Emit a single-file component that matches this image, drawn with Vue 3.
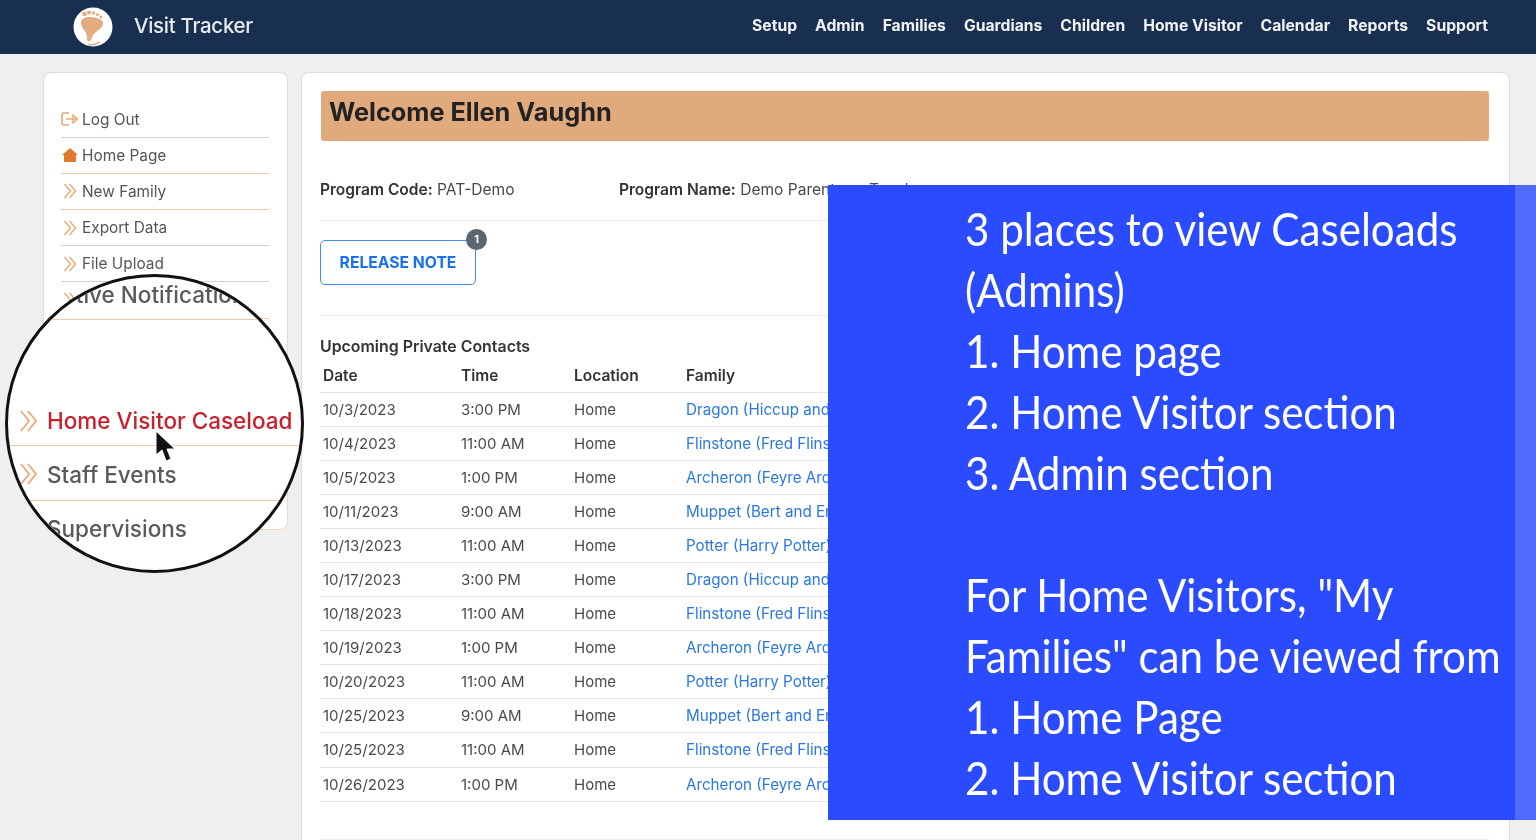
<template>
  <div class="app">
    <header class="topbar">
      <div class="brand">
        <span class="logo">
          <svg viewBox="0 0 40 40" width="40" height="40">
            <circle cx="20" cy="20" r="19.500" fill="#fff" />
            <path d="M8 16c0-4 4-6 8-6 5 0 12 1 14 5 1 4-3 7-7 10-3 2-4 5-5 8-1 2-4 2-4-1 0-5-1-6-3-9-2-2-3-5-3-7z" fill="#e3ac80" />
            <circle cx="11.500" cy="7" r="2.300" fill="#e3ac80" />
            <circle cx="16" cy="5.500" r="1.900" fill="#e3ac80" />
            <circle cx="20.500" cy="6" r="1.700" fill="#e3ac80" />
            <circle cx="24.500" cy="7.500" r="1.500" fill="#e3ac80" />
            <circle cx="28" cy="10" r="1.400" fill="#e3ac80" />
            <path d="M15 37.500c5 1 9-.5 11.500-3" fill="none" stroke="#e3ac80" stroke-width="1.500" />
          </svg>
        </span>
        <span class="brand-name">Visit Tracker</span>
      </div>
      <nav class="nav">
        <a v-for="n in navItems" :key="n">{{ n }}</a>
      </nav>
    </header>

    <div class="content">
      <aside class="side card">
        <div v-for="s in sideItems" :key="s.label" class="side-item" :class="{ warm: s.warm }">
          <span class="side-icon">
            <svg v-if="s.icon === 'logout'" viewBox="0 0 18 14" width="18" height="14">
              <path d="M8 1H3a2 2 0 0 0-2 2v8a2 2 0 0 0 2 2h5" fill="none" stroke="#e8a86c" stroke-width="1.500" />
              <path d="M5 7h11M12 3 16.500 7 12 11z" fill="none" stroke="#e8a86c" stroke-width="1.300" />
            </svg>
            <svg v-else-if="s.icon === 'home'" viewBox="0 0 16 14" width="16" height="14">
              <path d="M8 0 16 7h-2v7H2V7H0z" fill="#e07a30" />
            </svg>
            <svg v-else viewBox="0 0 14 16" width="14" height="16">
              <path d="M1.500 1l6 7-6 7M6.500 1l6 7-6 7" fill="none" stroke="#e8a86c" stroke-width="1.300" />
            </svg>
          </span>
          <span>{{ s.label }}</span>
        </div>
      </aside>

      <main class="main card">
        <div class="banner"><h1>Welcome Ellen Vaughn</h1></div>
        <div class="program">
          <span class="program-code"><b>Program Code:</b> PAT-Demo</span>
          <span><b>Program Name:</b> Demo Parents as Teachers</span>
        </div>
        <div class="release">
          <button type="button" class="release-btn">
            RELEASE NOTE
            <span class="badge">1</span>
          </button>
        </div>
        <h2 class="table-title">Upcoming Private Contacts</h2>
        <table class="contacts">
          <thead>
            <tr>
              <th class="c-date">Date</th>
              <th class="c-time">Time</th>
              <th class="c-loc">Location</th>
              <th>Family</th>
            </tr>
          </thead>
          <tbody>
            <tr v-for="(r, i) in contacts" :key="i">
              <td>{{ r[0] }}</td>
              <td>{{ r[1] }}</td>
              <td>Home</td>
              <td><a>{{ r[2] }}</a></td>
            </tr>
          </tbody>
        </table>
        <div class="table-end"></div>
      </main>
    </div>

    <!-- zoom lens over the sidebar -->
    <div class="lens">
      <div class="lens-row lens-top"><span>Active Notifications</span></div>
      <div class="lens-row lens-red">
        <svg class="chev" viewBox="0 0 20 22" width="20" height="22">
          <path d="M2 1l8 10-8 10M9 1l8 10-8 10" fill="none" stroke="#eba876" stroke-width="1.800" />
        </svg>
        <span>Home Visitor Caseload</span>
      </div>
      <div class="lens-row lens-staff">
        <svg class="chev" viewBox="0 0 20 22" width="20" height="22">
          <path d="M2 1l8 10-8 10M9 1l8 10-8 10" fill="none" stroke="#eba876" stroke-width="1.800" />
        </svg>
        <span>Staff Events</span>
      </div>
      <div class="lens-sup"><span>Supervisions</span></div>
    </div>
    <svg class="cursor" viewBox="0 0 20 32" width="20" height="32">
      <path d="M1 0v24l6-5 4 11 5-2-4-10h8z" fill="#111" stroke="#fff" stroke-width="1" />
    </svg>

    <!-- caption panel -->
    <section class="caption">
      <div class="caption-text">
        <p v-for="(l, i) in captionLines" :key="i">{{ l }}</p>
      </div>
    </section>
  </div>
</template>

<script setup>
const navItems = ['Setup', 'Admin', 'Families', 'Guardians', 'Children', 'Home Visitor', 'Calendar', 'Reports', 'Support']

const sideItems = [
  { label: 'Log Out', icon: 'logout' },
  { label: 'Home Page', icon: 'home', warm: true },
  { label: 'New Family', icon: 'chev', warm: true },
  { label: 'Export Data', icon: 'chev' },
  { label: 'File Upload', icon: 'chev' },
  { label: 'Active Notifications', icon: 'chev', warm: true },
  { label: 'Home Visitor Caseload', icon: 'chev', warm: true },
  { label: 'Staff Events', icon: 'chev', warm: true },
  { label: 'Supervisions', icon: 'chev', warm: true },
]

const contacts = [
  ['10/3/2023', '3:00 PM', 'Dragon (Hiccup and Astrid Haddock)'],
  ['10/4/2023', '11:00 AM', 'Flinstone (Fred Flinstone)'],
  ['10/5/2023', '1:00 PM', 'Archeron (Feyre Archeron)'],
  ['10/11/2023', '9:00 AM', 'Muppet (Bert and Ernie Muppet)'],
  ['10/13/2023', '11:00 AM', 'Potter (Harry Potter)'],
  ['10/17/2023', '3:00 PM', 'Dragon (Hiccup and Astrid Haddock)'],
  ['10/18/2023', '11:00 AM', 'Flinstone (Fred Flinstone)'],
  ['10/19/2023', '1:00 PM', 'Archeron (Feyre Archeron)'],
  ['10/20/2023', '11:00 AM', 'Potter (Harry Potter)'],
  ['10/25/2023', '9:00 AM', 'Muppet (Bert and Ernie Muppet)'],
  ['10/25/2023', '11:00 AM', 'Flinstone (Fred Flinstone)'],
  ['10/26/2023', '1:00 PM', 'Archeron (Feyre Archeron)'],
]

const captionLines = [
  '3 places to view Caseloads',
  '(Admins)',
  '1. Home page',
  '2. Home Visitor section',
  '3. Admin section',
  ' ',
  'For Home Visitors, "My',
  'Families" can be viewed from',
  '1. Home Page',
  '2. Home Visitor section',
]
</script>

<style>
html, body {
  margin: 0;
  overflow: hidden;
  background: #efefef;
}
</style>

<style scoped>
.app {
  position: relative;
  height: 840px;
  overflow: hidden;
  background: #efefef;
  font-family: Inter, "Liberation Sans", sans-serif;
  font-size: 15px;
  color: #4a4a4a;
  filter: blur(0.35px);
}

.topbar {
  display: flex;
  align-items: center;
  justify-content: space-between;
  box-sizing: border-box;
  height: 54px;
  padding: 0 48px 4px 73px;
  background: #182f50;
}

.brand {
  display: flex;
  align-items: center;
  gap: 21px;
}

.logo {
  display: flex;
  margin-top: 4px;
}

.brand-name {
  font-size: 20.500px;
  font-weight: 500;
  color: #e6eaee;
  letter-spacing: -0.3px;
}

.nav {
  display: flex;
  gap: 18px;
}

.nav a {
  color: #f2f3f5;
  font-size: 15.700px;
  font-weight: 700;
}

.content {
  display: flex;
  align-items: flex-start;
  gap: 13px;
  padding: 18px 26px 0 43px;
}

.card {
  box-sizing: border-box;
  background: #fff;
  border: 1px solid #efd9c4;
  border-top-color: #dcdcdc;
  border-radius: 8px;
}

.side {
  width: 245px;
  height: 458px;
  padding: 28.500px 18px 0 17px;
}

.side-item {
  display: flex;
  align-items: center;
  gap: 3px;
  height: 36.200px;
  border-bottom: 1px solid #cfcfcf;
  box-sizing: border-box;
  font-size: 15.400px;
  color: #555;
}

.side-item.warm {
  border-bottom-color: #eec9a6;
}

.side-icon {
  display: flex;
  justify-content: center;
  width: 18px;
}

.main {
  flex: 1;
  height: 900px;
  padding: 18px 20px 0 18px;
}

.banner {
  box-sizing: border-box;
  height: 50px;
  margin-left: 1px;
  padding: 4px 8px;
  background: #e1aa7d;
  border-radius: 3px;
}

.banner h1 {
  margin: 0;
  font-size: 25.300px;
  line-height: 34px;
  font-weight: 700;
  color: #222;
}

.program {
  display: flex;
  height: 80px;
  padding-top: 39px;
  box-sizing: border-box;
  border-bottom: 1px solid #f3ebe3;
  white-space: nowrap;
  font-size: 15.550px;
  line-height: 20px;
}

.program b {
  font-weight: 600;
  color: #333;
}

.program-code {
  width: 299px;
}

.release {
  height: 95px;
  padding-top: 19px;
  box-sizing: border-box;
  border-bottom: 1px solid #f3ebe3;
}

.release-btn {
  position: relative;
  box-sizing: border-box;
  width: 156px;
  height: 45px;
  background: #fff;
  border: 1px solid #3f8cf5;
  border-radius: 5px;
  font: 700 15.700px Inter, "Liberation Sans", sans-serif;
  color: #1a6ff0;
}

.badge {
  position: absolute;
  top: -12px;
  right: -12px;
  width: 21px;
  height: 21px;
  border-radius: 50%;
  background: #5c6670;
  color: #fff;
  font-size: 11px;
  line-height: 21px;
  text-align: center;
}

.table-title {
  margin: 21px 0 0;
  font-size: 15.900px;
  line-height: 20px;
  font-weight: 600;
  color: #333;
}

.contacts {
  width: 100%;
  margin-top: 1px;
  border-collapse: collapse;
  white-space: nowrap;
}

.contacts th,
.contacts td {
  padding: 0 3px;
  text-align: left;
  border-bottom: 1px solid #e6e6e6;
}

.contacts th {
  height: 34px;
  font-size: 15.500px;
  font-weight: 600;
  color: #333;
}

.contacts td {
  height: 33.050px;
}

.contacts a {
  font-size: 15.200px;
  color: #2a78e0;
}

.c-date {
  width: 132px;
}

.c-time {
  width: 107px;
}

.c-loc {
  width: 106px;
}

.table-end {
  margin-top: 37px;
  border-top: 1px solid #f3ebe3;
}

.lens {
  position: absolute;
  left: 5px;
  top: 274px;
  box-sizing: border-box;
  width: 299px;
  height: 299px;
  overflow: hidden;
  background: #fff;
  border: 3px solid #111;
  border-radius: 50%;
  font-size: 22.500px;
  font-weight: 500;
  color: #5a5a5a;
}

.lens-row {
  display: flex;
  align-items: center;
  border-bottom: 1px solid #eec9a6;
  white-space: nowrap;
}

.lens-top {
  box-sizing: border-box;
  height: 43px;
  padding: 0 0 8px 39px;
}

.lens-red {
  height: 126px;
  padding: 76px 0 0 11px;
  box-sizing: border-box;
  gap: 8px;
  color: #c8202c;
}

.lens-staff {
  height: 55px;
  padding: 2px 0 0 11px;
  box-sizing: border-box;
  gap: 8px;
}

.lens-sup {
  padding: 14px 0 0 39px;
  white-space: nowrap;
}

.chev {
  flex: none;
}

.cursor {
  position: absolute;
  left: 155px;
  top: 431px;
}

.caption {
  position: absolute;
  left: 828px;
  top: 185px;
  box-sizing: border-box;
  width: 708px;
  height: 635px;
  padding: 13px 0 0 137px;
  background: #2a4bff;
  border-right: 21px solid #4f6cff;
}

.caption-text p {
  margin: 0;
  height: 61px;
  font-family: Lato, "Noto Sans", sans-serif;
  font-size: 46px;
  line-height: 61px;
  color: #fff;
  white-space: pre;
  transform: scaleX(0.916);
  transform-origin: left center;
}
</style>
